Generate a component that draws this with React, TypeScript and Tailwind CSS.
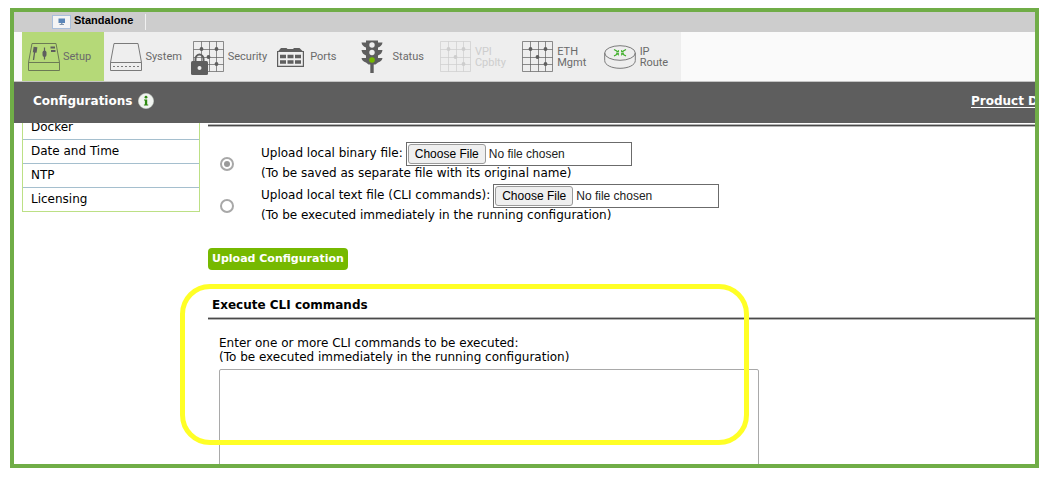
import type { ReactNode } from "react";

const INK = "#5e5e5e";

function SetupIcon() {
  return (
    <svg width="34" height="30" viewBox="0 0 34 30" fill="none" stroke="#6c7a55" strokeWidth="1">
      <path d="M5 1.5H29L32.5 20.5H1.5Z" />
      <path d="M1.5 20.5H32.5V28.5H1.5Z" />
      <g stroke={INK}>
        <path d="M8 7L6.500 18" strokeWidth="1.300" />
        <path d="M8.500 5L7.700 10.500" strokeWidth="3.800" />
        <path d="M17.500 5.500V17.500" strokeWidth="1.200" />
        <path d="M17.500 10.500V13" strokeWidth="4" strokeLinecap="round" />
        <path d="M23.500 5.500H28M24 9H28.500" strokeWidth="1.800" />
      </g>
    </svg>
  );
}

function SystemIcon() {
  return (
    <svg width="34" height="30" viewBox="0 0 34 30" fill="none" stroke="#7a7a7a" strokeWidth="1">
      <path d="M5 1.500H29L32.500 20.500H1.500Z" />
      <path d="M1.500 20.500H32.500V28.500H1.500Z" />
      <path d="M4 24.500H31" strokeDasharray="2 2" />
    </svg>
  );
}

function Lattice({ color = INK }: { color?: string }) {
  return (
    <g stroke={color} fill={color}>
      <path d="M.5 .5H30.500V30.500H.5ZM8.500 .5V30.500M16.500 .5V30.500M23.500 .5V30.500M.5 8.500H30.500M.5 16.500H30.500M.5 23.500H30.500" strokeWidth=".7" fill="none" />
      <g stroke="none">
        <circle cx="8.500" cy="8" r="1.900" />
        <circle cx="23.500" cy="8" r="1.900" />
        <circle cx="15.500" cy="16" r="1.900" />
        <circle cx="23.500" cy="23" r="1.900" />
      </g>
    </g>
  );
}

function LatticeIcon({ color }: { color?: string }) {
  return (
    <svg width="31" height="31" viewBox="0 0 31 31">
      <Lattice color={color} />
    </svg>
  );
}

function SecurityIcon() {
  return (
    <svg width="34" height="38" viewBox="0 -3 34 38">
      <g transform="translate(2 0)">
        <Lattice />
      </g>
      <path d="M4.500 22V18a4 4.500 0 0 1 8 0V22" fill="none" stroke={INK} strokeWidth="2" />
      <rect x="0" y="20" width="17" height="14" rx="1.500" fill={INK} />
      <circle cx="8.500" cy="27" r="2" fill="#eeeeee" />
    </svg>
  );
}

function PortsIcon() {
  return (
    <svg width="27" height="20" viewBox="0 0 27 20">
      <path d="M.5 5L4 1H9.500L10.500 2H16L17 1H22.500L26.500 5Z" fill={INK} />
      <path d="M.6 4.500H26.400V19.400H.6Z" fill="none" stroke={INK} strokeWidth="1.200" />
      <path d="M3 9.500H9M10.500 9.500H16.500M18 9.500H24M3 15H9M10.500 15H16.500M18 15H24" stroke={INK} strokeWidth="3.400" />
    </svg>
  );
}

function StatusIcon() {
  return (
    <svg width="25" height="33" viewBox="0 0 25 33">
      <path d="M5 .5H17V2.500H21.500Q21 6 17 7.500V10H21.500Q21 14 17 15.500V18H21.500Q21 21 17 22.500L14.500 24.500H7.500L5 22.500Q1 21 .5 18H5V15.500Q1 14 .5 10H5V7.500Q1 6 .5 2.500H5Z" fill={INK} />
      <path d="M11 24V33" stroke={INK} strokeWidth="3.400" />
      <circle cx="11" cy="5" r="2.700" fill="#eeeeee" />
      <circle cx="11" cy="12.500" r="2.700" fill="#eeeeee" />
      <circle cx="11" cy="20" r="2.800" fill="#76b900" />
    </svg>
  );
}

function RouteIcon() {
  return (
    <svg width="32" height="24" viewBox="0 0 32 24" fill="none" stroke="#7a7a7a" strokeWidth="1">
      <ellipse cx="16" cy="8" rx="15.300" ry="7.300" />
      <path d="M.7 8V15.500C.7 20 7.500 23.300 16 23.300S31.300 20 31.300 15.500V8" />
      <g stroke="#3fae2a" strokeWidth="1.300">
        <path d="M10 4.500L14.500 7M22 4.500L17.500 7M10 11L14.500 8.500M22 11L17.500 8.500" />
        <path d="M14.500 5V7H12M17.500 5V7H20M14.500 10.500V8.500H12M17.500 10.500V8.500H20" strokeWidth=".8" />
      </g>
    </svg>
  );
}

function MonitorIcon() {
  return (
    <svg width="19" height="14" viewBox="0 0 19 14">
      <rect x=".5" y=".5" width="18" height="13" fill="#f4f4f4" stroke="#a9bfda" />
      <rect x="6.500" y="3.500" width="6.500" height="4.500" fill="#5b86b8" />
      <path d="M9 8H10.500V9H12V10H7.500V9H9Z" fill="#8397ad" />
    </svg>
  );
}

function InfoIcon() {
  return (
    <svg width="16" height="16" viewBox="0 0 16 16">
      <circle cx="8" cy="8" r="7.600" fill="#f1f4f1" stroke="#cfd6cf" strokeWidth=".6" />
      <path d="M6 6.500H9.200V11.500H10.200V12.500H5.900V11.500H6.900V7.500H6Z" fill="#2f8a12" />
      <circle cx="8" cy="4.200" r="1.400" fill="#2f8a12" />
    </svg>
  );
}

type Tab = { lines: string[]; icon: ReactNode; state?: "active" | "disabled" };

const tabs: Tab[] = [
  { lines: ["Setup"], icon: <SetupIcon />, state: "active" },
  { lines: ["System"], icon: <SystemIcon /> },
  { lines: ["Security"], icon: <SecurityIcon /> },
  { lines: ["Ports"], icon: <PortsIcon /> },
  { lines: ["Status"], icon: <StatusIcon /> },
  { lines: ["VPI", "Cpblty"], icon: <LatticeIcon color="#cdcdcd" />, state: "disabled" },
  { lines: ["ETH", "Mgmt"], icon: <LatticeIcon /> },
  { lines: ["IP", "Route"], icon: <RouteIcon /> },
];

const menu = ["Docker", "Date and Time", "NTP", "Licensing"];

const uploads = [
  { id: "binary", label: "Upload local binary file:", note: "(To be saved as separate file with its original name)" },
  { id: "text", label: "Upload local text file (CLI commands):", note: "(To be executed immediately in the running configuration)" },
];

function Rule() {
  return <div className="h-[3px] border-y border-[#b5b5b5] bg-[#4a4a4a]" />;
}

export default function App() {
  return (
    <div className="flex h-screen bg-white pt-2 pr-[22px] pb-3 pl-2.5 font-['DejaVu_Sans',Verdana,sans-serif] text-xs text-black">
      <div className="relative flex min-w-0 flex-1 flex-col overflow-hidden border-4 border-[#70ad47]">
        <div className="flex h-5 shrink-0 items-center bg-[#cdcdcd] pl-[38px]">
          <MonitorIcon />
          <span className="ml-[3px] pb-1 font-['Liberation_Sans',Arial,sans-serif] text-[11px] leading-4 font-bold">Standalone</span>
          <span className="ml-3 h-4 w-px bg-[#f0f0f0]" />
        </div>

        <nav className="flex h-[50px] shrink-0 border-b border-[#c4c4c4] bg-[#fafafa] pl-2">
          <div className="grid w-[659px] grid-cols-8 bg-[#eeeeee] font-[Roboto,sans-serif] text-[11px] leading-[11px]">
            {tabs.map((tab) => (
              <button
                key={tab.lines[0]}
                type="button"
                disabled={tab.state === "disabled"}
                className={
                  "flex items-center gap-0.5 pl-1 text-left " +
                  (tab.state === "active" ? "bg-[#b5d978] " : "") +
                  (tab.state === "disabled" ? "text-[#cdcdcd]" : "text-[#6a6a6a]")
                }
              >
                <span className="flex w-[35px] shrink-0 justify-center">{tab.icon}</span>
                <span>
                  {tab.lines.map((line) => (
                    <span key={line} className="block">{line}</span>
                  ))}
                </span>
              </button>
            ))}
          </div>
        </nav>

        <header className="flex h-[41px] shrink-0 items-center bg-[#5e5e5e] pb-1 pl-[19px] text-white">
          <h1 className="text-xs font-bold">Configurations</h1>
          <span className="ml-1.5"><InfoIcon /></span>
          <a href="#product" className="ml-auto w-16 font-bold whitespace-nowrap underline underline-offset-2">Product D</a>
        </header>

        <div className="flex min-h-0 flex-1 items-start gap-2 overflow-hidden pl-2">
          <ul className="-mt-2 w-[178px] shrink-0 border border-[#bce085]">
            {menu.map((item) => (
              <li key={item} className="border-b border-[#a5bfce] last:border-b-0">
                <a href="#menu" className="block pl-2 leading-[23px]">{item}</a>
              </li>
            ))}
          </ul>

          <main className="min-w-0 flex-1 pt-px">
            <Rule />
            <div className="flex flex-col gap-1 pt-[15px] pl-3">
              {uploads.map((item, i) => (
                <div key={item.id} className="flex items-center gap-[27px]">
                  <input
                    type="radio"
                    name="upload"
                    defaultChecked={i === 0}
                    aria-labelledby={"label-" + item.id}
                    className="mt-1.5 size-3.5 shrink-0 appearance-none rounded-full border-2 border-[#a8a8a8] bg-white bg-clip-content p-0.5 checked:bg-[#9a9a9a]"
                  />
                  <div>
                    <div className="flex items-start gap-[3px]">
                      <label id={"label-" + item.id} htmlFor={item.id} className="leading-[22px] whitespace-nowrap">{item.label}</label>
                      <input
                        id={item.id}
                        type="file"
                        className="h-6 w-[226px] border border-[#6b6b6b] p-px font-['Liberation_Sans',Arial,sans-serif] text-xs leading-[18px] text-[#222] file:mr-[3px] file:h-5 file:rounded-[3px] file:border file:border-solid file:border-[#9a9a9a] file:bg-[#efefef] file:px-1.5 file:leading-4 file:text-black"
                      />
                    </div>
                    <p className="leading-[14px]">{item.note}</p>
                  </div>
                </div>
              ))}
            </div>

            <button type="button" className="mt-[26px] block h-[22px] rounded-sm bg-[#76b900] px-1 text-[11px] font-bold text-white">
              Upload Configuration
            </button>

            <h2 className="mt-[27px] mb-1 pl-1 leading-4 font-bold">Execute CLI commands</h2>
            <Rule />
            <div className="pt-4 pl-[11px]">
              <label htmlFor="commands" className="block leading-[14px]">
                Enter one or more CLI commands to be executed:
                <br />
                (To be executed immediately in the running configuration)
              </label>
              <textarea id="commands" className="mt-[5px] block h-40 w-[540px] resize-none rounded-xs border border-[#a9a9a9] p-0.5" />
            </div>
          </main>
        </div>

        <div className="pointer-events-none absolute top-[272px] left-[166px] h-[161px] w-[569px] rounded-[30px] border-5 border-[#ffff26]" />
      </div>
    </div>
  );
}
